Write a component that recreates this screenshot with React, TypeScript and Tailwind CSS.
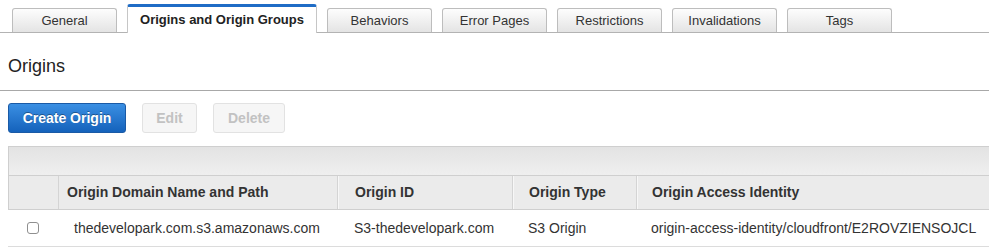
const tabs = ['General', 'Origins and Origin Groups', 'Behaviors', 'Error Pages', 'Restrictions', 'Invalidations', 'Tags']

const columns = [
  { label: 'Origin Domain Name and Path', head: 'pl-[8px]' },
  { label: 'Origin ID', head: 'pl-[17px]' },
  { label: 'Origin Type', head: 'pl-[16px]' },
  { label: 'Origin Access Identity', head: 'pl-[15px]' },
]

const row = [
  'thedevelopark.com.s3.amazonaws.com',
  'S3-thedevelopark.com',
  'S3 Origin',
  'origin-access-identity/cloudfront/E2ROVZIENSOJCL',
]

export default function App() {
  return (
    <div className="h-[252px] w-[989px] overflow-hidden bg-white font-['Liberation_Sans',Arial,sans-serif] text-[#333]">
      {/* tab strip */}
      <div className="flex h-[33px] items-end gap-[10px] border-b border-[#b3b3b3] pl-[12px]">
        {tabs.map((tab, i) =>
          i === 1 ? (
            <div
              key={tab}
              className="-mb-px flex h-[29px] w-[190px] items-center justify-center rounded-t-[3px] border-x border-t-[3px] border-x-[#c6c6c6] border-t-[#1f6cc6] bg-white pb-[1px] text-[13px] font-bold text-[#222]"
            >
              {tab}
            </div>
          ) : (
            <div
              key={tab}
              className="flex h-[24px] w-[105px] items-center justify-center rounded-t-[3px] border-x border-t border-[#bdbdbd] bg-gradient-to-b from-[#fdfdfd] to-[#e4e4e4] text-[13px] text-[#333]"
            >
              {tab}
            </div>
          ),
        )}
      </div>

      {/* section heading */}
      <div className="border-b border-[#a8a8a8] pb-[12px] pl-[8px] pt-[21px] text-[18px] leading-[24px] text-[#222]">
        Origins
      </div>

      {/* actions */}
      <div className="mt-[12px] flex gap-[16px] pl-[8px]">
        <button className="h-[30px] w-[118px] rounded-[3px] border border-[#1a5aa6] bg-gradient-to-b from-[#3a8fe3] to-[#1462bb] text-[14px] font-bold text-white [text-shadow:0_-1px_0_rgba(0,0,0,0.35)]">
          Create Origin
        </button>
        <button className="h-[30px] w-[55px] rounded-[3px] border border-[#e2e2e2] bg-[#f6f6f6] text-[14px] font-bold text-[#c2c2c2]">
          Edit
        </button>
        <button className="h-[30px] w-[72px] rounded-[3px] border border-[#e2e2e2] bg-[#f6f6f6] text-[14px] font-bold text-[#c2c2c2]">
          Delete
        </button>
      </div>

      {/* table */}
      <div className="ml-[8px] mt-[13px]">
        <div className="h-[29px] border-l border-t border-[#cfcfcf] bg-gradient-to-b from-[#e3e3e3] to-[#efefef]" />
        <div className="grid h-[35px] grid-cols-[50px_279px_175px_124px_1fr] border-y border-l border-[#cfcfcf] bg-[#ebebeb] text-[14px] font-bold text-[#333]">
          <div className="border-r border-[#d4d4d4]" />
          {columns.map((c, i) => (
            <div
              key={c.label}
              className={`flex items-center whitespace-nowrap ${c.head} ${i < 3 ? 'border-r border-[#d4d4d4] shadow-[1px_0_0_#f7f7f7]' : ''}`}
            >
              {c.label}
            </div>
          ))}
        </div>
        <div className="grid h-[37px] grid-cols-[50px_279px_175px_124px_1fr] border-b border-[#dcdcdc] text-[14px] text-[#333]">
          <div className="flex items-center pl-[19px]">
            <span className="h-[12px] w-[12px] rounded-[3px] border border-[#8f8f8f] bg-white" />
          </div>
          <div className="flex items-center whitespace-nowrap pl-[16px]">{row[0]}</div>
          <div className="flex items-center whitespace-nowrap pl-[17px]">{row[1]}</div>
          <div className="flex items-center whitespace-nowrap pl-[16px]">{row[2]}</div>
          <div className="flex items-center whitespace-nowrap pl-[15px]">{row[3]}</div>
        </div>
      </div>
    </div>
  )
}
